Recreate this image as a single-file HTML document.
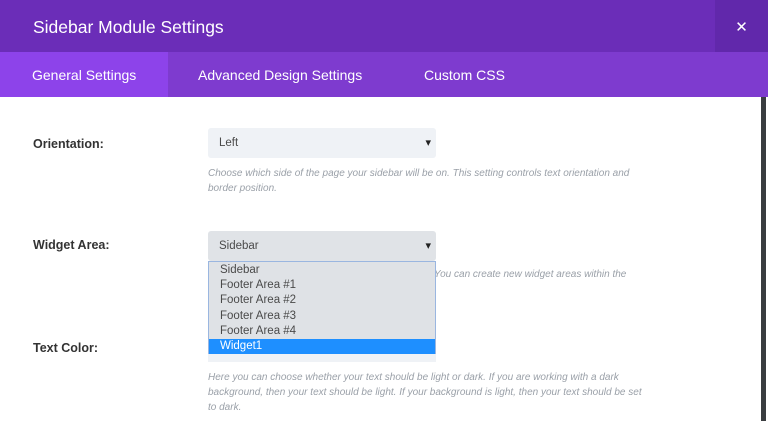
<!DOCTYPE html>
<html><head><style>
body{margin:0;width:768px;height:421px;overflow:hidden;font-family:"Liberation Sans",sans-serif;background:#fff;position:relative}
.a{position:absolute}
.hdr{left:0;top:0;width:768px;height:52px;background:#6b2db8}
.x{left:715px;top:0;width:53px;height:52px;background:#6128ab;color:#fff;font-size:15px;text-align:center;line-height:56px}
.tabs{left:0;top:52px;width:768px;height:45px;background:#7e3bcf}
.tab{top:52px;height:45px;line-height:46px;color:#fff;font-size:14px}
.lbl{left:33px;font-weight:bold;font-size:12.5px;color:#333}
.sel{left:208px;width:228px;height:30px;border-radius:3px;font-size:11.5px;color:#4a4a4a;line-height:30px;box-sizing:border-box;padding-left:11px}
.sel:after{content:"▾";position:absolute;right:5px;top:0;font-size:11px;color:#222}
.help{left:208px;font-style:italic;font-size:10px;color:#9aa0a8;line-height:15px}
.list{left:208px;top:261px;width:228px;height:93px;background:#dfe2e6;border:1px solid #9ab6e0;box-sizing:border-box;font-size:11.5px;color:#4a4a4a;padding-top:1px}
.list div{height:15.2px;line-height:15px;padding-left:11px}
</style></head><body>
<div class="a hdr"></div>
<div class="a" style="left:33px;top:17px;color:#fff;font-size:17.5px">Sidebar Module Settings</div>
<div class="a x">✕</div>
<div class="a tabs"></div>
<div class="a" style="left:0;top:52px;width:168px;height:45px;background:#8d43ea"></div>
<div class="a tab" style="left:32px">General Settings</div>
<div class="a tab" style="left:198px">Advanced Design Settings</div>
<div class="a tab" style="left:424px">Custom CSS</div>
<div class="a" style="left:761px;top:97px;width:5px;height:324px;background:#3a3d40"></div>

<div class="a lbl" style="top:137px">Orientation:</div>
<div class="a sel" style="top:128px;background:#eff2f6">Left</div>
<div class="a help" style="top:166px">Choose which side of the page your sidebar will be on. This setting controls text orientation and<br>border position.</div>

<div class="a lbl" style="top:238px">Widget Area:</div>
<div class="a sel" style="top:231px;background:#e0e3e7">Sidebar</div>
<div class="a help" style="top:267px;left:434px">You can create new widget areas within the</div>

<div class="a lbl" style="top:341px">Text Color:</div>
<div class="a" style="left:208px;top:352px;width:228px;height:10px;background:#eff2f6"></div>
<div class="a list">
<div>Sidebar</div><div>Footer Area #1</div><div>Footer Area #2</div><div>Footer Area #3</div><div>Footer Area #4</div>
<div style="background:#1e8fff;color:#fff">Widget1</div>
</div>
<div class="a help" style="top:370px">Here you can choose whether your text should be light or dark. If you are working with a dark<br>background, then your text should be light. If your background is light, then your text should be set<br>to dark.</div>
</body></html>
